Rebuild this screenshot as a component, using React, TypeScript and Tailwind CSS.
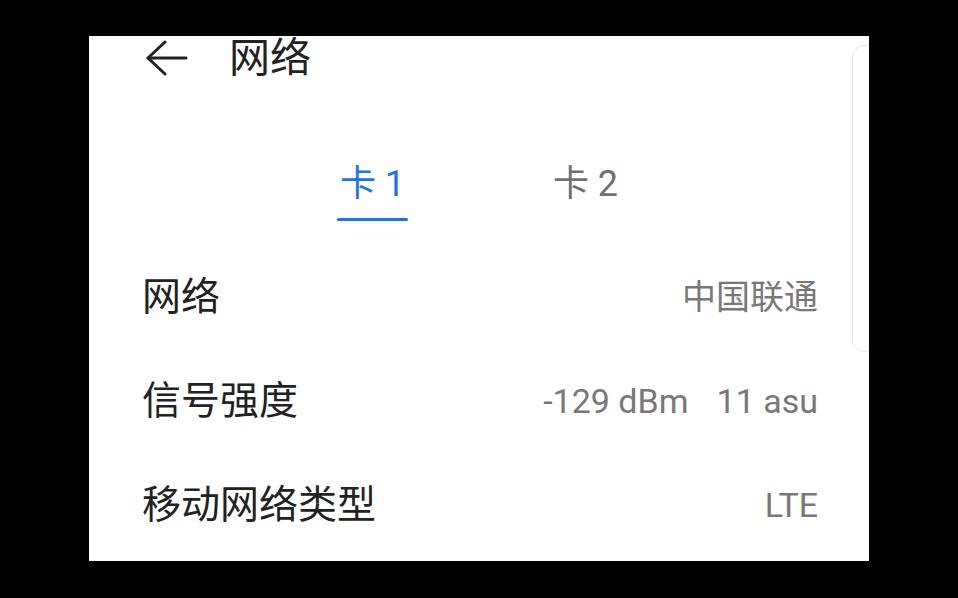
import React from 'react'

const rows = [
  { label: '网络', value: ['中国联通'] },
  { label: '信号强度', value: ['-129 dBm', '11 asu'] },
  { label: '移动网络类型', value: ['LTE'] },
]

function BackArrow() {
  return (
    <svg width="42" height="40" viewBox="0 0 42 40" fill="none" stroke="#222" strokeWidth="3" strokeLinecap="round" strokeLinejoin="round">
      <path d="M2 20 H40" />
      <path d="M19 4 L2 20 L19 36" />
    </svg>
  )
}

export default function App() {
  return (
    <div
      className="w-[958px] h-[598px] bg-black overflow-hidden"
      style={{ fontFamily: 'Roboto, "Noto Sans CJK SC", sans-serif' }}
    >
      <div className="relative ml-[89px] mt-[36px] w-[780px] h-[525px] bg-white overflow-hidden">
        {/* scroll hint on the right edge */}
        <div className="absolute top-[9px] right-[-10px] w-[27px] h-[307px] rounded-xl border border-[#e8e8e8]" />

        {/* Header */}
        <div className="h-[44px] flex items-center pl-[57px]">
          <BackArrow />
          <span className="ml-[41px] text-[41px] leading-[44px] text-[#222]">网络</span>
        </div>

        {/* Tabs */}
        <div className="mt-[82px] flex justify-center">
          <div className="w-[213px] flex flex-col items-center">
            <span className="text-[36px] leading-[44px] text-[#1f76d6]">卡 1</span>
            <div className="mt-[12px] w-[71px] h-[3px] rounded-full bg-[#1f76d6]" />
          </div>
          <div className="w-[213px] flex flex-col items-center">
            <span className="text-[36px] leading-[44px] text-[#707070]">卡 2</span>
          </div>
        </div>

        {/* Rows */}
        <div className="mt-[24px] pl-[53px] pr-[51px]">
          {rows.map((row) => (
            <div key={row.label} className="h-[104px] flex items-center justify-between">
              <span className="text-[39px] leading-none text-[#222]">{row.label}</span>
              <div className="flex gap-[28px]">
                {row.value.map((v) => (
                  <span key={v} className="text-[34px] leading-none text-[#787878]">
                    {v}
                  </span>
                ))}
              </div>
            </div>
          ))}
        </div>
      </div>
    </div>
  )
}
